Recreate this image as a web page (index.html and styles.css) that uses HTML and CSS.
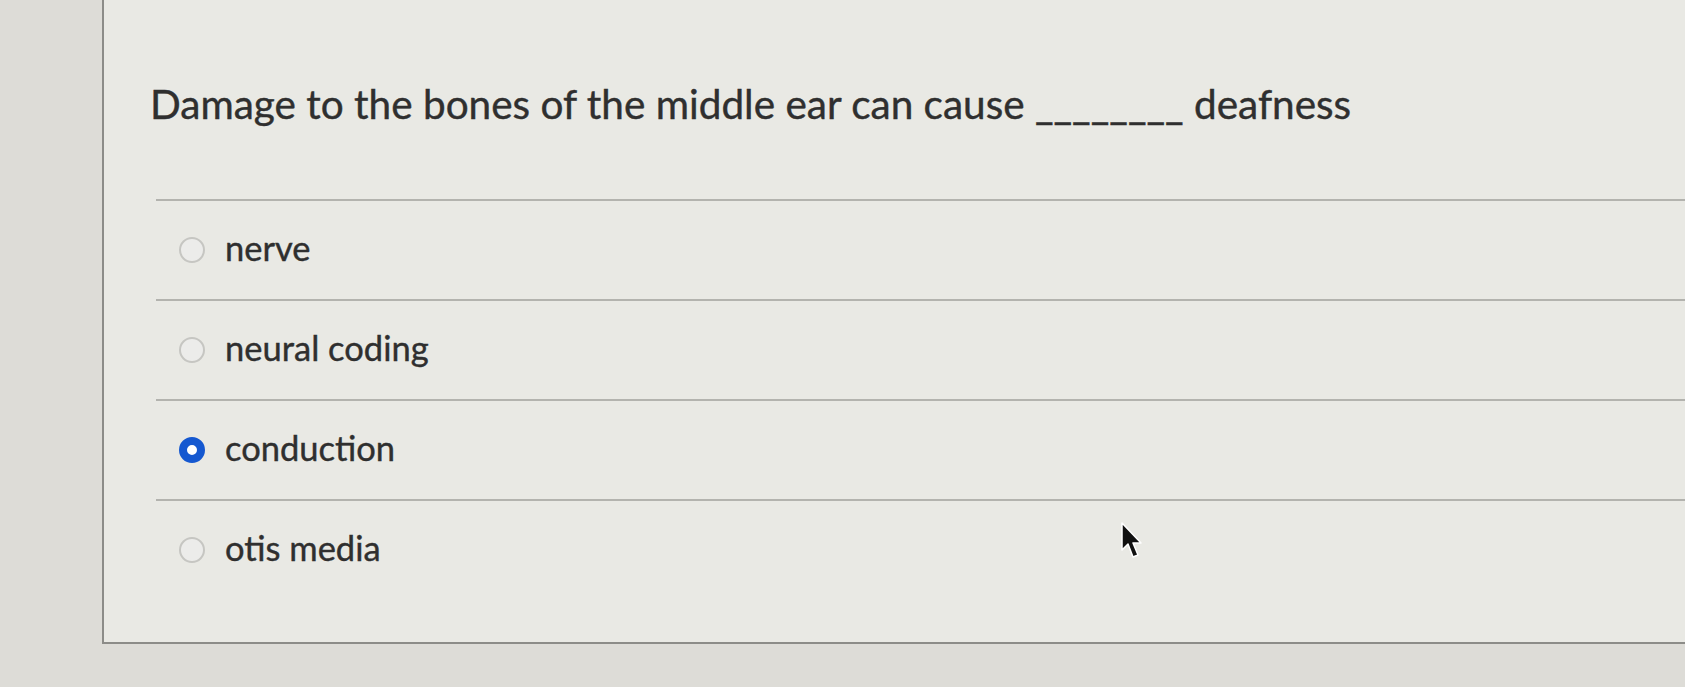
FILE: index.html
```html
<!DOCTYPE html>
<html lang="en">
<head>
    <meta charset="UTF-8">
    <title>Question</title>
    <link rel="stylesheet" href="styles.css">
</head>
<body>
    <div class="panel">
        <div class="question">Damage to the bones of the middle ear can cause ________ deafness</div>
        <div class="answers">
            <label class="answer">
                <span class="radio"></span>
                <span class="answer-text">nerve</span>
            </label>
            <label class="answer">
                <span class="radio"></span>
                <span class="answer-text">neural coding</span>
            </label>
            <label class="answer">
                <span class="radio selected"></span>
                <span class="answer-text">conduction</span>
            </label>
            <label class="answer last">
                <span class="radio"></span>
                <span class="answer-text">otis media</span>
            </label>
        </div>
    </div>
    <svg class="cursor" width="22" height="38" viewBox="0 0 22 38">
        <path d="M2 1 L2 28 L8 22 L13 35 L18 33 L13 21 L21 21 Z" fill="#111" stroke="#fff" stroke-width="1.5" stroke-linejoin="round"/>
    </svg>
</body>
</html>
```

FILE: styles.css
```css
body {
    margin: 0;
    background-color: #dddcd7;
    font-family: Lato, "Noto Sans", sans-serif;
    color: #2f2f2f;
    overflow: hidden;
}
.panel {
    margin-left: 102px;
    height: 644px;
    background-color: #e9e9e4;
    border-left: 2px solid #8c8c88;
    border-bottom: 2px solid #8c8c88;
    box-sizing: border-box;
    padding-left: 46px;
}
.question {
    padding-top: 80px;
    font-size: 40.5px;
    line-height: 48px;
    white-space: nowrap;
    -webkit-text-stroke: 0.4px #2f2f2f;
}
.answers {
    margin-top: 71px;
    margin-left: 6px;
}
.answer {
    display: flex;
    align-items: center;
    height: 100px;
    border-top: 2px solid #b3b3ae;
    padding-left: 23px;
    box-sizing: border-box;
}
.answer.last {
    height: 100px;
}
.radio {
    width: 22px;
    height: 22px;
    border: 2px solid #c6c6c2;
    border-radius: 50%;
    background-color: #ececea;
    flex-shrink: 0;
}
.radio.selected {
    width: 10px;
    height: 10px;
    border: 8px solid #1558d0;
    background-color: #fff;
}
.answer-text {
    margin-left: 20px;
    font-size: 34.5px;
    padding-bottom: 6px;
    -webkit-text-stroke: 0.4px #2f2f2f;
}
.cursor {
    position: absolute;
    left: 1120px;
    top: 522px;
}
```
